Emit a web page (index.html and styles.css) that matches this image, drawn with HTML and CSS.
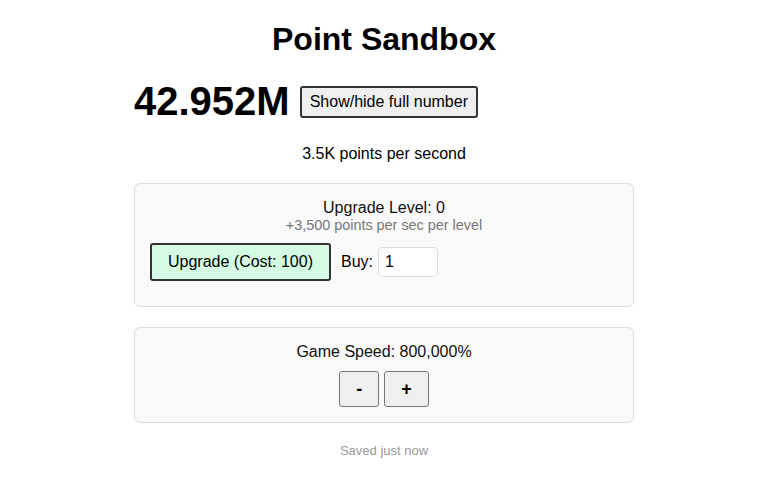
FILE: index.html
```html
<!DOCTYPE html>
<html lang="en">
<head>
    <meta charset="UTF-8">
    <meta name="viewport" content="width=device-width, initial-scale=1.0">
    <title>Point Sandbox</title>
    <link rel="stylesheet" href="styles.css">
</head>
<body>
<div class="container">
    <h1>Point Sandbox</h1>

    <div class="points-row">
        <div class="points">42.952M</div>
        <button class="toggle-btn">Show/hide full number</button>
    </div>

    <p class="rate">3.5K points per second</p>

    <!-- upgrade panel -->
    <div class="panel">
        <div class="panel-title">Upgrade Level: 0</div>
        <div class="panel-sub">+3,500 points per sec per level</div>
        <div class="upgrade-row">
            <button class="upgrade-btn">Upgrade (Cost: 100)</button>
            <label class="buy-label">Buy:</label>
            <input class="buy-input" type="text" value="1">
        </div>
    </div>

    <!-- speed panel -->
    <div class="panel center">
        <div class="panel-title">Game Speed: 800,000%</div>
        <div class="speed-row">
            <button class="speed-btn">-</button>
            <button class="speed-btn">+</button>
        </div>
    </div>

    <p class="saved">Saved just now</p>
</div>
</body>
</html>
```

FILE: styles.css
```css
* {
    box-sizing: border-box;
}

body {
    margin: 0;
    font-family: "Liberation Sans", Arial, sans-serif;
    color: #000;
    background: #fff;
}

.container {
    width: 500px;
    margin: 0 auto;
}

h1 {
    text-align: center;
    font-size: 32px;
    margin: 21px 0 21px;
}

.points-row {
    display: flex;
    align-items: center;
    gap: 10px;
}

.points {
    font-size: 40px;
    font-weight: bold;
}

.toggle-btn {
    font-family: inherit;
    font-size: 16px;
    padding: 5px 8px;
    background: #efefef;
    border: 2px solid #333;
    border-radius: 3px;
    color: #000;
}

.rate {
    text-align: center;
    font-size: 16px;
    margin: 21px 0 20px;
}

.panel {
    background: #f9f9f9;
    border: 1px solid #ddd;
    border-radius: 6px;
    padding: 15px 15px;
    margin-bottom: 20px;
    text-align: center;
}

.panel-title {
    font-size: 16px;
    color: #111;
}

.panel-sub {
    font-size: 14.4px;
    color: #777;
}

.upgrade-row {
    display: flex;
    align-items: center;
    gap: 10px;
    margin: 10px 0 10px;
}

.upgrade-btn {
    font-family: inherit;
    font-size: 16px;
    padding: 8px 16px;
    background: #d4fce3;
    border: 2px solid #333;
    border-radius: 3px;
    color: #000;
}

.buy-label {
    font-size: 16px;
    margin-right: -5px;
}

.buy-input {
    width: 60px;
    height: 30px;
    font-family: inherit;
    font-size: 16px;
    padding: 5px 6px;
    border: 1px solid #ddd;
    border-radius: 4px;
    background: #fff;
    outline: none;
}

.speed-row {
    display: flex;
    justify-content: center;
    gap: 5px;
    margin-top: 10px;
}

.speed-btn {
    font-family: inherit;
    font-size: 18px;
    font-weight: bold;
    height: 36px;
    padding: 0 16px;
    background: #efefef;
    border: 1px solid #777;
    border-radius: 3px;
    color: #000;
}

.saved {
    text-align: center;
    font-size: 13px;
    color: #999;
    margin: 19px 0;
}
```
